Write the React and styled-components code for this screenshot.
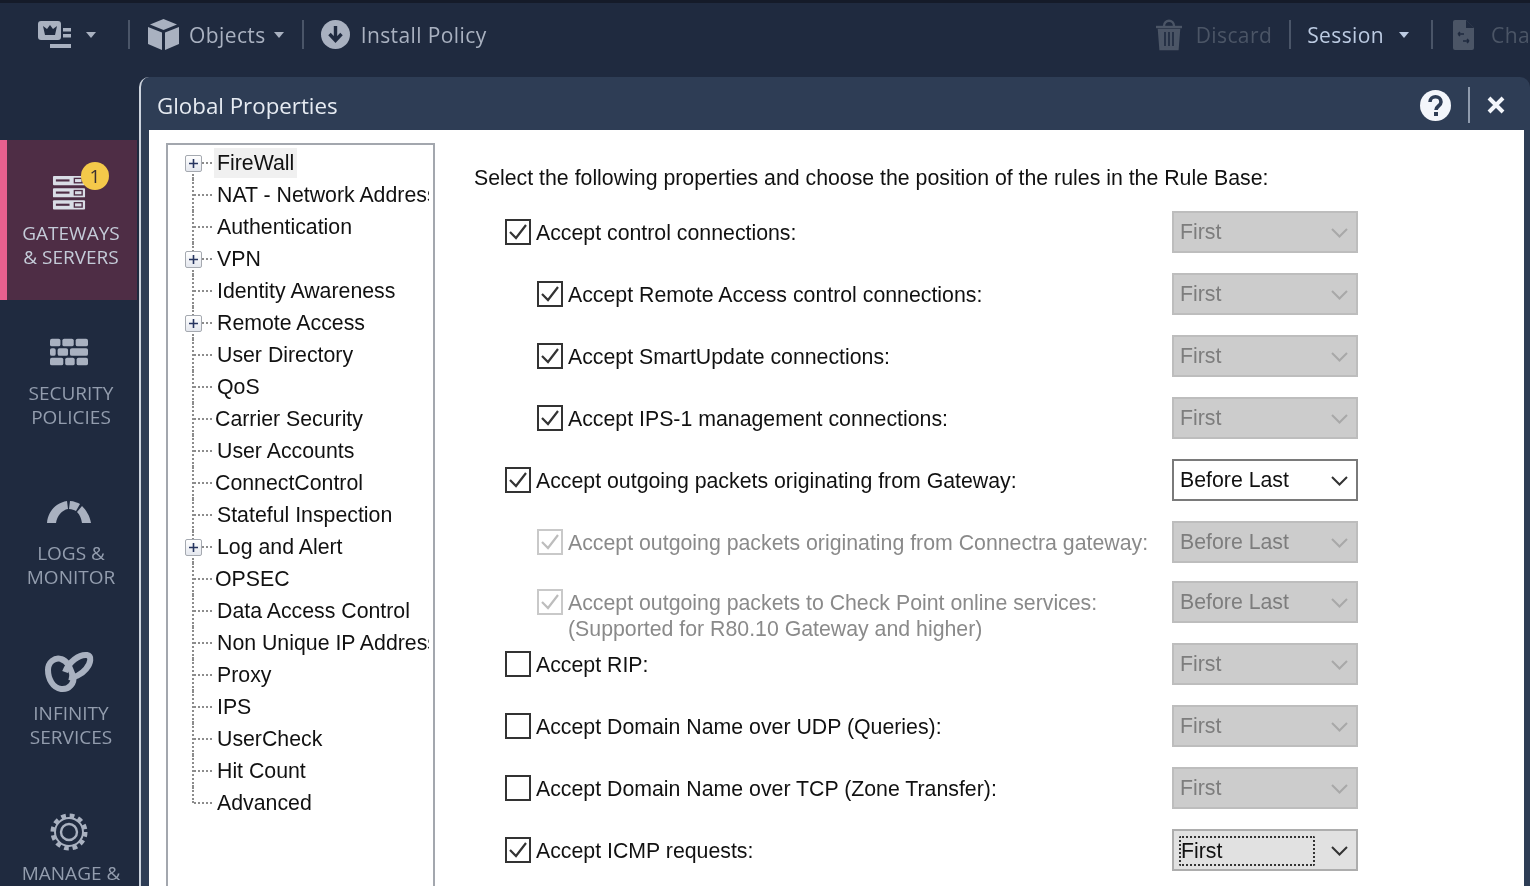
import React from 'react';
import styled, { createGlobalStyle } from 'styled-components';

const Global = createGlobalStyle`
  html, body {
    margin: 0;
    padding: 0;
    background: #1f2a3f;
    overflow: hidden;
  }
  * { box-sizing: border-box; }
`;

const Page = styled.div`
  width: 1530px;
  height: 886px;
  overflow: hidden;
  display: grid;
  grid-template-columns: 139px 1fr;
  grid-template-rows: 77px 809px;
  background: #1f2a3f;
  font-family: "Open Sans", "Liberation Sans", sans-serif;
  filter: blur(0.5px);
`;

const TopBar = styled.div`
  grid-column: 1 / 3;
  display: flex;
  align-items: center;
  height: 66px;
  border-top: 3px solid #151b29;
  color: #a9b1c0;
  font-size: 21px;
  letter-spacing: 0.4px;
  white-space: nowrap;
  overflow: hidden;
`;

const ToolGroup = styled.div`
  flex: none;
  display: flex;
  align-items: center;
  gap: ${p => p.$gap || 10}px;
  margin-left: ${p => p.$left || 0}px;
  color: ${p => p.$color || 'inherit'};
  svg { flex: none; }
`;

const Sep = styled.div`
  flex: none;
  width: 2px;
  height: 29px;
  background: #4a5568;
  margin-left: ${p => p.$left}px;
`;

const Caret = styled.span`
  flex: none;
  width: 0;
  height: 0;
  border-left: 5.5px solid transparent;
  border-right: 5.5px solid transparent;
  border-top: 6px solid ${p => p.$color || '#a9b1c0'};
  margin-left: ${p => p.$left || 0}px;
`;

const Sidebar = styled.nav`
  padding-top: 63px;
  width: 137px;
`;

const NavItem = styled.div`
  position: relative;
  height: 160px;
  padding-top: 30px;
  background: ${p => (p.$active ? '#4e2d45' : 'transparent')};
  border-left: 7px solid ${p => (p.$active ? '#e8608f' : 'transparent')};
  color: ${p => (p.$active ? '#c4cbd8' : '#939dae')};
  display: flex;
  flex-direction: column;
  align-items: center;
`;

const NavIcon = styled.div`
  height: 44px;
  display: flex;
  align-items: center;
  justify-content: center;
  margin-left: -6px;
`;

const NavLabel = styled.div`
  margin-top: 7px;
  margin-left: -2px;
  font-size: 19px;
  line-height: 24px;
  text-align: center;
  white-space: nowrap;
`;

const Badge = styled.span`
  position: absolute;
  left: 74px;
  top: 22px;
  width: 28px;
  height: 28px;
  border-radius: 50%;
  background: #f4c94a;
  color: #3a3030;
  font-size: 19px;
  line-height: 28px;
  text-align: center;
`;

const Dialog = styled.section`
  display: flex;
  flex-direction: column;
  height: 809px;
  background: #2e3d55;
  border-left: 2px solid #ccd3dd;
  border-top-left-radius: 10px;
  border-top-right-radius: 10px;
  padding: 0 6px 0 8px;
  overflow: hidden;
`;

const DialogHead = styled.header`
  height: 53px;
  flex: none;
  display: flex;
  align-items: center;
  color: #e6ebf2;
  font-size: 22.3px;
  padding: 3px 19px 0 8px;
`;

const DialogTitle = styled.div`
  flex: 1;
`;

const HeadSep = styled.div`
  width: 2px;
  height: 36px;
  background: #8f9bad;
  margin: 0 17px 0 17px;
`;

const DialogBody = styled.div`
  flex: 1;
  display: flex;
  background: #fff;
  padding: 13px 0 0 17px;
  min-height: 0;
  font-family: "Liberation Sans", Arial, sans-serif;
  font-size: 21.3px;
  color: #111;
`;

const Tree = styled.div`
  width: 269px;
  flex: none;
  height: 780px;
  border: 2px solid #a3a7ae;
  padding-top: 2px;
`;

const TreeRow = styled.div`
  display: flex;
  align-items: center;
  width: 261px;
  height: 32px;
  white-space: nowrap;
  overflow: hidden;
`;

const Connector = styled.span`
  position: relative;
  display: block;
  flex: none;
  width: 46px;
  height: 32px;
  &::before {
    content: '';
    position: absolute;
    left: 24px;
    top: ${p => (p.$first ? '16px' : 0)};
    height: ${p => (p.$last || p.$first ? '16px' : '32px')};
    border-left: 2px dotted #8c8c8c;
  }
  &::after {
    content: '';
    position: absolute;
    left: 26px;
    top: 15px;
    width: 18px;
    border-top: 2px dotted #8c8c8c;
  }
`;

const PlusBox = styled.span`
  position: absolute;
  z-index: 1;
  left: 17px;
  top: 8px;
  width: 17px;
  height: 17px;
  border: 1.5px solid #a5a9b0;
  border-radius: 2px;
  background: linear-gradient(#fff, #e4e7ee);
  display: flex;
  align-items: center;
  justify-content: center;
`;

const TreeLabel = styled.span`
  padding: 0 3px;
  line-height: 30px;
  margin-left: ${p => p.$nudge || 0}px;
  background: ${p => (p.$selected ? '#f0f0f0' : 'transparent')};
`;

const Pane = styled.div`
  flex: 1;
  padding: 20px 0 0 39px;
`;

const Intro = styled.div`
  height: 32px;
  line-height: 30px;
  margin-bottom: 6px;
  white-space: nowrap;
`;

const Rows = styled.div`
  display: flex;
  flex-direction: column;
  padding-left: 31px;
  width: 884px;
`;

const Row = styled.div`
  display: grid;
  grid-template-columns: 1fr 186px;
  grid-template-rows: minmax(0, 1fr);
  align-items: center;
  flex: none;
  height: 62px;
  margin-top: ${p => (p.$pull ? -2 : 0)}px;
  padding-left: ${p => (p.$indent ? 32 : 0)}px;
`;

const CheckLabel = styled.div`
  display: flex;
  align-items: ${p => (p.$hanging ? 'flex-start' : 'center')};
  margin-top: ${p => (p.$hanging ? 26 : 0)}px;
  gap: 5px;
  white-space: nowrap;
  color: ${p => (p.$disabled ? '#8a8a8a' : '#111')};
  line-height: 26px;
`;

const LabelText = styled.span`
  padding-top: 1px;
`;

const Box = styled.span`
  width: 26px;
  height: 26px;
  flex: none;
  border: 2px solid ${p => (p.$disabled ? '#c9c9c9' : '#333')};
  background: #fff;
  display: flex;
  align-items: center;
  justify-content: center;
`;

const Combo = styled.div`
  height: 42px;
  display: flex;
  align-items: center;
  justify-content: space-between;
  padding: 1px 8px 0 6px;
  border: 2px solid ${p => (p.$state === 'on' ? '#7a7a7a' : p.$state === 'focus' ? '#adadad' : '#bdbdbd')};
  background: ${p => (p.$state === 'on' ? '#fff' : p.$state === 'focus' ? '#e1e1e1' : '#cccccc')};
  color: ${p => (p.$state === 'off' ? '#7d7d7d' : '#111')};
`;

const ComboValue = styled.span`
  ${p => p.$focus && `
    flex: 0 0 136px;
    margin-left: -1px;
    height: 30px;
    line-height: 27px;
    border: 2px dotted #333;
    border-radius: 2px;
  `}
`;

const Monitor = () => (
  <svg width="34" height="30" viewBox="0 0 34 30" fill="#a9b1c0">
    <rect x="0" y="1" width="23" height="19" rx="3" />
    <path d="M5 6l4 3 3-4 3 4 4-3-2 9H7z" fill="#1f2a3f" />
    <rect x="25" y="8" width="8" height="3.5" />
    <rect x="25" y="14" width="8" height="3.5" />
    <rect x="12" y="24" width="21" height="4" />
  </svg>
);

const Cube = () => (
  <svg width="31" height="31" viewBox="0 0 31 31" fill="#a9b1c0">
    <path d="M15.5 0L29 5.5 15.5 11 2 5.5z" />
    <path d="M0 8l14 5.5V31L0 25z" />
    <path d="M31 8l-14 5.5V31l14-6z" />
  </svg>
);

const InstallIcon = () => (
  <svg width="29" height="29" viewBox="0 0 29 29">
    <circle cx="14.5" cy="14.5" r="14.5" fill="#a9b1c0" />
    <path d="M14.5 6v14M8.5 14l6 6.5 6-6.5" fill="none" stroke="#1f2a3f" strokeWidth="3.4" />
  </svg>
);

const Trash = () => (
  <svg width="26" height="32" viewBox="0 0 26 32" fill="none" stroke="#4b5566" strokeWidth="2.4">
    <path d="M0 8h26" />
    <path d="M8 7c0-7 10-7 10 0" />
    <path d="M3 11l1.5 19h17L23 11z" fill="#4b5566" />
    <path d="M9 13v14M13 13v14M17 13v14" stroke="#1f2a3f" strokeWidth="1.6" />
  </svg>
);

const DocIcon = () => (
  <svg width="21" height="30" viewBox="0 0 21 30">
    <path d="M2 0h11l8 8v20a2 2 0 0 1-2 2H2a2 2 0 0 1-2-2V2a2 2 0 0 1 2-2z" fill="#4b5566" />
    <path d="M13 0v8h8" fill="#1f2a3f" />
    <path d="M5 14h6M5 14l2-2M5 14l2 2M16 21h-6M16 21l-2-2M16 21l-2 2" stroke="#1f2a3f" strokeWidth="1.5" fill="none" />
  </svg>
);

const Servers = () => (
  <svg width="35" height="35" viewBox="0 0 36 36" fill="none">
    {[0, 12.5, 25].map(y => (
      <g key={y}>
        <rect x="1" y={y + 1} width="33" height="9.5" rx="1" fill="#d9dde6" />
        <rect x="4" y={y + 4.5} width="14" height="2.2" fill="#4e2d45" />
        <rect x="23" y={y + 3.5} width="8" height="4.5" fill="none" stroke="#4e2d45" strokeWidth="1.4" />
      </g>
    ))}
  </svg>
);

const Wall = () => (
  <svg width="38" height="28" viewBox="0 0 40 28" fill="#a9b1c0">
    <rect x="0" y="0" width="11" height="8" rx="2" />
    <rect x="13" y="0" width="12" height="8" rx="2" />
    <rect x="27" y="0" width="13" height="8" rx="2" />
    <rect x="0" y="10" width="6" height="8" rx="2" />
    <rect x="8" y="10" width="11" height="8" rx="2" />
    <rect x="21" y="10" width="19" height="8" rx="2" />
    <rect x="0" y="20" width="14" height="8" rx="2" />
    <rect x="16" y="20" width="10" height="8" rx="2" />
    <rect x="28" y="20" width="12" height="8" rx="2" />
  </svg>
);

const Gauge = () => (
  <svg width="44" height="24" viewBox="0 0 44 24" fill="#a9b1c0">
    <path d="M0 23C1 11 9 3 20 1l1 8c-6 1-11 7-12 14z" />
    <path d="M23 1c4 0 8 2 10 3l-4 7c-2-1-4-2-7-2z" />
    <path d="M35 6c4 4 8 10 9 17h-9c-1-5-2-8-5-11z" />
  </svg>
);

const Infinity_ = () => (
  <svg width="50" height="42" viewBox="0 0 50 42" fill="none" stroke="#a9b1c0" strokeWidth="6">
    <path d="M4 19c0-8 7-13 13-11 7 2 9 9 12 17 2 7 -4 14-12 13C9 37 4 28 4 19z" />
    <path d="M21 21C25 11 35 3 43 4c5 1 4 8-1 14-5 6-12 9-17 8" />
  </svg>
);

const Gear = () => (
  <svg width="38" height="38" viewBox="0 0 38 38" fill="none" stroke="#a9b1c0">
    <circle cx="19" cy="19" r="14" strokeWidth="2" />
    <circle cx="19" cy="19" r="8" strokeWidth="2.4" />
    <circle cx="19" cy="19" r="16" strokeWidth="5" strokeDasharray="4.6 3.8" />
  </svg>
);

const Help = () => (
  <svg width="31" height="31" viewBox="0 0 31 31">
    <circle cx="15.5" cy="15.5" r="15.5" fill="#f3f6fb" />
    <path d="M10 12c0-7 11-7 11 0 0 4-5 4-5 8" fill="none" stroke="#2e3d55" strokeWidth="3.6" />
    <rect x="14" y="22" width="4" height="4" fill="#2e3d55" />
  </svg>
);

const Close = () => (
  <svg width="18" height="18" viewBox="0 0 18 18">
    <path d="M2 2l14 14M16 2L2 16" stroke="#f3f6fb" strokeWidth="4" />
  </svg>
);

const Tick = ({ color }) => (
  <svg width="20" height="18" viewBox="0 0 20 18">
    <path d="M2 9l6 6L18 2" fill="none" stroke={color} strokeWidth="2.2" />
  </svg>
);

const Chevron = ({ color }) => (
  <svg width="17" height="10" viewBox="0 0 17 10">
    <path d="M1 1l7.5 7.5L16 1" fill="none" stroke={color} strokeWidth="2" />
  </svg>
);

const treeItems = [
  { label: 'FireWall', plus: true, selected: true },
  { label: 'NAT - Network Address Translation' },
  { label: 'Authentication' },
  { label: 'VPN', plus: true },
  { label: 'Identity Awareness' },
  { label: 'Remote Access', plus: true },
  { label: 'User Directory' },
  { label: 'QoS' },
  { label: 'Carrier Security', nudge: -2 },
  { label: 'User Accounts' },
  { label: 'ConnectControl', nudge: -2 },
  { label: 'Stateful Inspection' },
  { label: 'Log and Alert', plus: true },
  { label: 'OPSEC', nudge: -2 },
  { label: 'Data Access Control' },
  { label: 'Non Unique IP Address Ranges' },
  { label: 'Proxy' },
  { label: 'IPS' },
  { label: 'UserCheck' },
  { label: 'Hit Count' },
  { label: 'Advanced' }
];

const formRows = [
  { label: 'Accept control connections:', checked: true, value: 'First' },
  { label: 'Accept Remote Access control connections:', indent: true, checked: true, value: 'First' },
  { label: 'Accept SmartUpdate connections:', indent: true, checked: true, value: 'First' },
  { label: 'Accept IPS-1 management connections:', indent: true, checked: true, value: 'First' },
  { label: 'Accept outgoing packets originating from Gateway:', checked: true, value: 'Before Last', state: 'on' },
  { label: 'Accept outgoing packets originating from Connectra gateway:', indent: true, checked: true, disabled: true, value: 'Before Last' },
  {
    label: 'Accept outgoing packets to Check Point online services:',
    second: '(Supported for R80.10 Gateway and higher)',
    indent: true,
    checked: true,
    disabled: true,
    value: 'Before Last',
    pull: true
  },
  { label: 'Accept RIP:', value: 'First' },
  { label: 'Accept Domain Name over UDP (Queries):', value: 'First' },
  { label: 'Accept Domain Name over TCP (Zone Transfer):', value: 'First' },
  { label: 'Accept ICMP requests:', checked: true, value: 'First', state: 'focus' }
];

const navItems = [
  { icon: <Servers />, lines: ['GATEWAYS', '& SERVERS'], active: true },
  { icon: <Wall />, lines: ['SECURITY', 'POLICIES'] },
  { icon: <Gauge />, lines: ['LOGS &', 'MONITOR'] },
  { icon: <Infinity_ />, lines: ['INFINITY', 'SERVICES'] },
  { icon: <Gear />, lines: ['MANAGE &', 'SETTINGS'] }
];

const App = () => (
  <Page>
    <Global />
    <TopBar>
      <ToolGroup $left={38}>
        <Monitor />
      </ToolGroup>
      <Caret $left={14} />
      <Sep $left={32} />
      <ToolGroup $left={18}>
        <Cube />
        Objects
      </ToolGroup>
      <Caret $left={8} />
      <Sep $left={18} />
      <ToolGroup $left={17} $gap={11}>
        <InstallIcon />
        Install Policy
      </ToolGroup>
      <ToolGroup $left={669} $gap={14} $color="#4b5566">
        <Trash />
        Discard
      </ToolGroup>
      <Sep $left={17} />
      <ToolGroup $left={16} $color="#bccbe2">
        Session
      </ToolGroup>
      <Caret $left={15} $color="#bccbe2" />
      <Sep $left={22} />
      <ToolGroup $left={20} $gap={17} $color="#4b5566">
        <DocIcon />
        Changes
      </ToolGroup>
    </TopBar>

    <Sidebar>
      {navItems.map(item => (
        <NavItem key={item.lines[0]} $active={item.active}>
          {item.active && <Badge>1</Badge>}
          <NavIcon>{item.icon}</NavIcon>
          <NavLabel>
            {item.lines[0]}
            <br />
            {item.lines[1]}
          </NavLabel>
        </NavItem>
      ))}
    </Sidebar>

    <Dialog>
      <DialogHead>
        <DialogTitle>Global Properties</DialogTitle>
        <Help />
        <HeadSep />
        <Close />
      </DialogHead>
      <DialogBody>
        <Tree>
          {treeItems.map((t, i) => (
            <TreeRow key={t.label}>
              <Connector $first={i === 0} $last={i === treeItems.length - 1}>
                {t.plus && (
                  <PlusBox>
                    <svg width="11" height="11" viewBox="0 0 11 11">
                      <path d="M5.5 1v9M1 5.5h9" stroke="#26355f" strokeWidth="1.6" />
                    </svg>
                  </PlusBox>
                )}
              </Connector>
              <TreeLabel $selected={t.selected} $nudge={t.nudge}>
                {t.label}
              </TreeLabel>
            </TreeRow>
          ))}
        </Tree>
        <Pane>
          <Intro>Select the following properties and choose the position of the rules in the Rule Base:</Intro>
          <Rows>
            {formRows.map(r => (
              <Row key={r.label} $indent={r.indent} $pull={r.pull}>
                <CheckLabel $disabled={r.disabled} $hanging={!!r.second}>
                  <Box $disabled={r.disabled}>
                    {r.checked && <Tick color={r.disabled ? '#bdbdbd' : '#333'} />}
                  </Box>
                  <LabelText>
                    {r.label}
                    {r.second && (
                      <>
                        <br />
                        {r.second}
                      </>
                    )}
                  </LabelText>
                </CheckLabel>
                <Combo $state={r.state || 'off'}>
                  <ComboValue $focus={r.state === 'focus'}>{r.value}</ComboValue>
                  <Chevron color={r.state ? '#333' : '#a8a8a8'} />
                </Combo>
              </Row>
            ))}
          </Rows>
        </Pane>
      </DialogBody>
    </Dialog>
  </Page>
);

export default App;
